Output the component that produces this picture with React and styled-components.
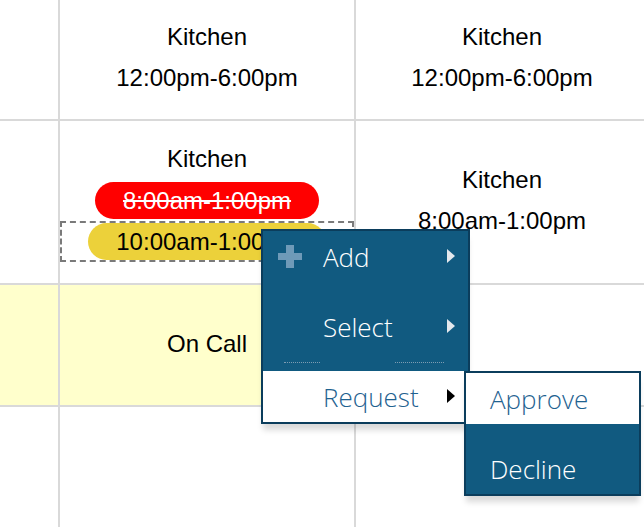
import React from "react"
import styled, { createGlobalStyle } from "styled-components"

const GlobalStyle = createGlobalStyle`
	html, body {
		margin: 0;
		padding: 0;
		overflow: hidden;
		background: #fff;
	}
`

const Page = styled.div`
	position: relative;
	width: 644px;
	height: 527px;
	overflow: hidden;
	font-family: "Liberation Sans", Arial, sans-serif;
	color: #000;
`

const Grid = styled.div`
	display: grid;
	grid-template-columns: 58px 294px 292px;
	grid-template-rows: 119px 162px 120px 120px;
	gap: 2px;
	width: 648px;
	background: #d9d9d9;
`

const Cell = styled.div`
	display: flex;
	flex-direction: column;
	align-items: center;
	justify-content: center;
	background: ${(p) => (p.$onCall ? "#ffffcc" : "#fff")};
	padding-bottom: ${(p) => p.$lift ?? 4}px;
	font-size: 24px;
`

const Line = styled.div`
	line-height: 41px;
	white-space: nowrap;
`

const Title = styled.div`
	line-height: 35px;
	margin-bottom: 6px;
`

const Pill = styled.div`
	height: 37px;
	line-height: 37px;
	padding: 0 28px;
	border-radius: 19px;
	white-space: nowrap;
	background: ${(p) => (p.$declined ? "#ff0000" : "#ecd13a")};
	color: ${(p) => (p.$declined ? "#fff" : "#000")};
	text-decoration: ${(p) => (p.$declined ? "line-through" : "none")};
`

const Selected = styled.div`
	align-self: stretch;
	display: flex;
	justify-content: center;
	margin-top: 2px;
	border: 2px dashed #7a7a7a;
`

const Menu = styled.div`
	position: absolute;
	left: 261px;
	top: 229px;
	width: 205px;
	border: 2px solid #0b3d5c;
	background: #115a80;
	box-shadow: 0 8px 6px -2px rgba(0, 0, 0, 0.15);
	font-family: "Open Sans", "Noto Sans", sans-serif;
	font-weight: 300;
	font-size: 26px;
`

const Item = styled.div`
	position: relative;
	display: flex;
	align-items: center;
	height: 51px;
	padding-left: ${(p) => p.$indent}px;
	background: ${(p) => (p.$active ? "#fff" : "transparent")};
	color: ${(p) => (p.$active ? "#1f6290" : "#fff")};
`

const Icon = styled.svg`
	position: absolute;
	left: 15px;
	top: 14px;
`

const Arrow = styled.span`
	position: absolute;
	left: 184px;
	top: 18px;
	width: 0;
	height: 0;
	border-top: 7px solid transparent;
	border-bottom: 7px solid transparent;
	border-left: 8px solid ${(p) => (p.$dark ? "#000" : "#e4e8ec")};
`

const Separator = styled.div`
	position: relative;
	height: 19px;
`

const Dots = styled.span`
	position: absolute;
	top: 10px;
	left: ${(p) => p.$left}px;
	width: ${(p) => p.$width}px;
	border-top: 1px dotted #7d9cb2;
`

const SubMenu = styled.div`
	position: absolute;
	left: 201px;
	top: 0;
	width: 173px;
	border: 2px solid #0b3d5c;
	background: #115a80;
	box-shadow: 0 8px 6px -2px rgba(0, 0, 0, 0.15);
`

function PlusIcon() {
	return (
		<Icon width="24" height="23" viewBox="0 0 24 23">
			<rect x="8" y="0" width="8" height="23" fill="#6f9ab8" />
			<rect x="0" y="8" width="24" height="7" fill="#6f9ab8" />
		</Icon>
	)
}

function ContextMenu() {
	return (
		<Menu>
			<Item $indent={60}>
				<PlusIcon />
				Add
				<Arrow />
			</Item>
			<Separator />
			<Item $indent={60}>
				Select
				<Arrow />
			</Item>
			<Separator>
				<Dots $left={21} $width={36} />
				<Dots $left={132} $width={49} />
			</Separator>
			<Item $indent={60} $active>
				Request
				<Arrow $dark />
				<SubMenu>
					<Item $indent={24} $active>Approve</Item>
					<Separator />
					<Item $indent={24}>Decline</Item>
				</SubMenu>
			</Item>
		</Menu>
	)
}

export default function App() {
	return (
		<Page>
			<GlobalStyle />
			<Grid>
				<Cell $lift={6} />
				<Cell $lift={6}>
					<Line>Kitchen</Line>
					<Line>12:00pm-6:00pm</Line>
				</Cell>
				<Cell $lift={6}>
					<Line>Kitchen</Line>
					<Line>12:00pm-6:00pm</Line>
				</Cell>

				<Cell />
				<Cell $lift={2}>
					<Title>Kitchen</Title>
					<Pill $declined>8:00am-1:00pm</Pill>
					<Selected>
						<Pill>10:00am-1:00pm</Pill>
					</Selected>
				</Cell>
				<Cell>
					<Line>Kitchen</Line>
					<Line>8:00am-1:00pm</Line>
				</Cell>

				<Cell $onCall />
				<Cell $onCall>
					<Line>On Call</Line>
				</Cell>
				<Cell />

				<Cell />
				<Cell />
				<Cell />
			</Grid>
			<ContextMenu />
		</Page>
	)
}
